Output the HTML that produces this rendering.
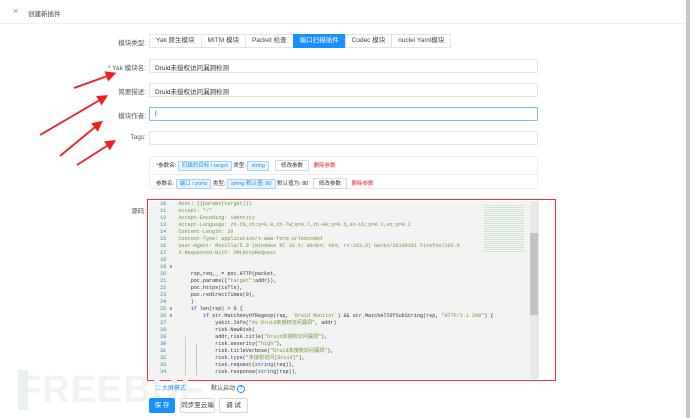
<!DOCTYPE html>
<html><head><meta charset="utf-8"><style>
*{box-sizing:border-box;margin:0;padding:0}
body{width:690px;height:418px;overflow:hidden;background:#fff;font-family:"Liberation Sans","Noto Sans CJK SC",sans-serif;font-size:7px;color:#333;position:relative}
.a{position:absolute}
.lbl{position:absolute;right:544px;font-size:6.5px;color:#555;white-space:nowrap}
.inp{position:absolute;left:149px;width:389px;height:14px;border:1px solid #e3e3e3;border-radius:2px;font-size:6.5px;padding:2px 5px;color:#333}
.tab{display:inline-block;height:14px;line-height:12px;border:1px solid #e3e3e3;margin-left:-1px;padding:0 6px;font-size:6.5px;color:#444}
.tag{display:inline-block;border:1px solid #a9d1f7;background:#eaf4fe;color:#1890ff;padding:0 3px;height:10px;line-height:9px;font-size:5.5px;border-radius:1px}
.btn{display:inline-block;border:1px solid #d9d9d9;padding:0 5px;height:11px;line-height:10px;font-size:5.5px;background:#fff}
.code{font-family:"Liberation Mono",monospace;font-size:5.1px;line-height:7px;white-space:pre}
.ln{color:#2b8a9e}
.c{color:#6a9a3a}
.k{color:#1d4fa5}
</style></head><body>
<div class="a" style="left:13px;top:6px;font-size:9px;color:#888">×</div>
<div class="a" style="left:28px;top:8px;font-size:6.5px;color:#444">创建新插件</div>
<div class="a" style="left:0;top:23px;width:686px;height:1px;background:#f0f0f0"></div>
<div class="a" style="left:686px;top:0;width:4px;height:418px;background:#c8c8c8"></div>

<div class="lbl" style="top:37px">模块类型:</div>
<div class="a" style="left:150px;top:34px;white-space:nowrap"><span class="tab">Yak 原生模块</span><span class="tab">MITM 模块</span><span class="tab">Packet 检查</span><span class="tab" style="background:#1890ff;border-color:#1890ff;color:#fff">端口扫描插件</span><span class="tab">Codec 模块</span><span class="tab">nuclei Yaml模块</span></div>

<div class="lbl" style="top:62px"><span style="color:#f5222d">*</span> Yak 模块名:</div>
<div class="inp" style="top:59px">Druid未授权访问漏洞检测</div>
<div class="lbl" style="top:86px">简要描述:</div>
<div class="inp" style="top:83px">Druid未授权访问漏洞检测</div>
<div class="lbl" style="top:110px">模块作者:</div>
<div class="inp" style="top:107px;border-color:#7cb8f7">|</div>
<div class="lbl" style="top:134px">Tags:</div>
<div class="inp" style="top:131px"></div>

<div class="a" style="left:149px;top:156px;width:389px;height:33px;border:1px solid #eee;border-radius:2px"></div>
<div class="a" style="left:149px;top:174px;width:389px;height:1px;background:#eee"></div>
<div class="a" style="left:156px;top:160px;font-size:5.5px;white-space:nowrap"><span style="color:#f5222d">*</span>参数名: <span class="tag">扫描的目标 / target</span> 类型: <span class="tag">string</span> &nbsp;&nbsp; <span class="btn">修改参数</span> &nbsp; <span style="color:#f5222d">删除参数</span></div>
<div class="a" style="left:156px;top:178px;font-size:5.5px;white-space:nowrap">参数名: <span class="tag">端口 / ports</span> 类型: <span class="tag">string 默认值: 80</span> 默认值为: 80 &nbsp; <span class="btn">修改参数</span> &nbsp; <span style="color:#f5222d">删除参数</span></div>

<div class="lbl" style="top:205px">源码:</div>
<div class="a" style="left:147px;top:199px;width:409px;height:182px;border:1.5px solid #f03030;background:#fff"></div>
<div class="a" style="left:149px;top:201px;width:390px;height:178px;background:#f2f2f2"></div>
<div class="a" style="left:530px;top:201px;width:9px;height:178px;background:#e8e8e8"></div>
<div class="a" style="left:530px;top:233px;width:8px;height:82px;background:#c2c2c2"></div>
<div class="a" style="left:484px;top:204px;width:40px;height:48px;opacity:.4;background:repeating-linear-gradient(#fff 0 1px,#9c9 1px 2px)"></div>
<div class="a code" style="left:154px;top:201px;width:376px;height:178px;overflow:hidden"><span class="ln">  10</span>    <span class="c">Host: {{params(target)}}</span>
<span class="ln">  11</span>    <span class="c">Accept: */*</span>
<span class="ln">  12</span>    <span class="c">Accept-Encoding: identity</span>
<span class="ln">  13</span>    <span class="c">Accept-Language: zh-CN,zh;q=0.8,zh-TW;q=0.7,zh-HK;q=0.5,en-US;q=0.3,en;q=0.2</span>
<span class="ln">  14</span>    <span class="c">Content-Length: 29</span>
<span class="ln">  15</span>    <span class="c">Content-Type: application/x-www-form-urlencoded</span>
<span class="ln">  16</span>    <span class="c">User-Agent: Mozilla/5.0 (Windows NT 10.0; Win64; x64; rv:103.0) Gecko/20100101 Firefox/103.0</span>
<span class="ln">  17</span>    <span class="c">X-Requested-With: XMLHttpRequest</span>
<span class="ln">  18</span>
<span class="ln">  19</span> ∨  <span class="c">`</span>
<span class="ln">  20</span>        rsp,req,_ = poc.HTTP(packet,
<span class="ln">  21</span>        poc.params({<span class="c">"target"</span>:addr}),
<span class="ln">  22</span>        poc.https(isTls),
<span class="ln">  23</span>        poc.redirectTimes(0),
<span class="ln">  24</span>        )
<span class="ln">  25</span> ∨      <span class="k">if</span> len(rsp) &gt; 0 {
<span class="ln">  26</span> ∨          <span class="k">if</span> str.MatchAnyOfRegexp(rsp, <span class="c">`Druid Monitor`</span>) &amp;&amp; str.MatchAllOfSubString(rsp, <span class="c">"HTTP/1.1 200"</span>) {
<span class="ln">  27</span>                yakit.Info(<span class="c">"%v Druid未授权访问漏洞"</span>, addr)
<span class="ln">  28</span>                risk.NewRisk(
<span class="ln">  29</span>                addr,risk.title(<span class="c">"Druid未授权访问漏洞"</span>),
<span class="ln">  30</span>                risk.severity(<span class="c">"high"</span>),
<span class="ln">  31</span>                risk.titleVerbose(<span class="c">"Druid未授权访问漏洞"</span>),
<span class="ln">  32</span>                risk.<span class="k">type</span>(<span class="c">"未授权访问[Druid]"</span>),
<span class="ln">  33</span>                risk.request(<span class="k">string</span>(req)),
<span class="ln">  34</span>                risk.response(<span class="k">string</span>(rsp)),</div>
<div class="a" style="left:185px;top:337px;width:1px;height:42px;background:#d8c8a0"></div>
<div class="a" style="left:196px;top:344px;width:1px;height:35px;background:#d8c8a0"></div>

<div class="a" style="left:18px;top:370px;font-size:38px;font-weight:bold;color:#f2f2f2;letter-spacing:1px;line-height:40px">FREEBUF</div>
<div class="a" style="left:18px;top:370px;width:10px;height:40px;background:#e8f2ec"></div>

<div class="a" style="left:156px;top:383px;font-size:6px;color:#1890ff">⛶ 大屏模式</div>
<div class="a" style="left:211px;top:383px;font-size:6px;color:#444">默认启动 <span style="color:#1890ff;border:1px solid #1890ff;border-radius:50%;padding:0 2px;font-size:5px">?</span></div>
<div class="a" style="left:149px;top:398px;width:26px;height:15px;background:#1890ff;color:#fff;font-size:6.5px;text-align:center;line-height:15px;border-radius:2px">保 存</div>
<div class="a" style="left:180px;top:398px;width:35px;height:15px;border:1px solid #d9d9d9;font-size:6.5px;text-align:center;line-height:13px;border-radius:2px">同步至云端</div>
<div class="a" style="left:219px;top:398px;width:29px;height:15px;border:1px solid #d9d9d9;font-size:6.5px;text-align:center;line-height:13px;border-radius:2px">调 试</div>

<svg class="a" style="left:0;top:0" width="690" height="418">
<defs><marker id="m" markerWidth="6" markerHeight="6" refX="4" refY="3" orient="auto"><path d="M0,0 L6,3 L0,6 Z" fill="#f02020"/></marker></defs>
<g stroke="#f02020" stroke-width="1.8" marker-end="url(#m)">
<line x1="74" y1="88" x2="113" y2="74"/>
<line x1="40" y1="135" x2="105" y2="97"/>
<line x1="60" y1="156" x2="100" y2="123"/>
<line x1="77" y1="165" x2="113" y2="142"/>
</g></svg>
</body></html>
